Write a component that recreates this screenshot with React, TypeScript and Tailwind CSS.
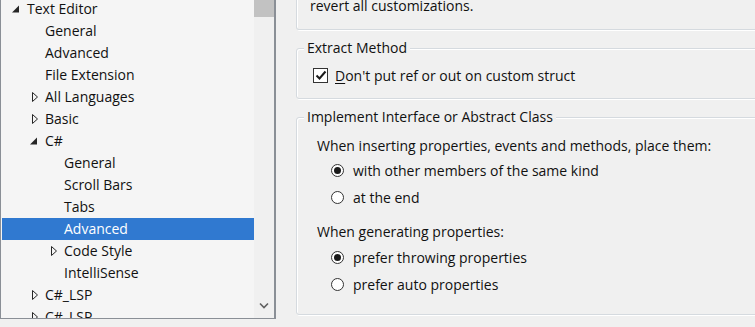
import React from "react";

type Row = { label: string; level: number; arrow?: "open" | "closed"; selected?: boolean };

const rows: Row[] = [
  { label: "Text Editor", level: 0, arrow: "open" },
  { label: "General", level: 1 },
  { label: "Advanced", level: 1 },
  { label: "File Extension", level: 1 },
  { label: "All Languages", level: 1, arrow: "closed" },
  { label: "Basic", level: 1, arrow: "closed" },
  { label: "C#", level: 1, arrow: "open" },
  { label: "General", level: 2 },
  { label: "Scroll Bars", level: 2 },
  { label: "Tabs", level: 2 },
  { label: "Advanced", level: 2, selected: true },
  { label: "Code Style", level: 2, arrow: "closed" },
  { label: "IntelliSense", level: 2 },
  { label: "C#_LSP", level: 1, arrow: "closed" },
  { label: "C#_LSP", level: 1, arrow: "closed" },
];

const padClass = ["pl-[7px]", "pl-[25px]", "pl-[44px]"];

function Arrow({ kind }: { kind?: "open" | "closed" }) {
  if (!kind) return <span className="w-[18px] shrink-0" />;
  if (kind === "open")
    return (
      <svg width="18" height="22" viewBox="0 0 18 22" className="shrink-0">
        <polygon points="10,14.5 3,14.5 10,7.5" fill="#262626" />
      </svg>
    );
  return (
    <svg width="18" height="22" viewBox="0 0 18 22" className="shrink-0">
      <polygon points="5.5,6.5 5.5,15.5 10.5,11" fill="none" stroke="#262626" strokeWidth="1" />
    </svg>
  );
}

function Radio({ checked }: { checked?: boolean }) {
  return (
    <span className="w-[13px] h-[13px] rounded-full border border-[#333] bg-white flex items-center justify-center shrink-0">
      {checked && <span className="w-[7px] h-[7px] rounded-full bg-[#1a1a1a]" />}
    </span>
  );
}

function Group({ title, children, cls }: { title?: string; children: React.ReactNode; cls: string }) {
  return (
    <div className={`relative border border-[#d5dadf] rounded-[3px] shadow-[inset_1px_1px_0_#ffffff,1px_1px_0_#ffffff] ${cls}`}>
      {title && (
        <span className="absolute left-[7px] top-[-11px] px-[3px] bg-[#f0f0f0] leading-[20px]">{title}</span>
      )}
      {children}
    </div>
  );
}

export default function App() {
  return (
    <div
      className="w-[755px] h-[327px] bg-[#f0f0f0] flex overflow-hidden text-[#111111] text-[14px]"
      style={{ fontFamily: '"Open Sans", "Noto Sans", sans-serif' }}
    >
      {/* Tree */}
      <div className="w-[276px] h-[319px] shrink-0 border-l border-b border-r-[2px] border-[#8a8f96] bg-[#f5f5f5] flex overflow-hidden">
        <div className="flex-1 flex flex-col mt-[-2px] pl-px">
          {rows.map((r, i) => (
            <div
              key={i}
              className={`h-[22px] shrink-0 flex items-center ${padClass[r.level]} ${r.selected ? "bg-[#3079d0] text-white" : ""}`}
            >
              <Arrow kind={r.arrow} />
              <span className="whitespace-nowrap leading-[22px]">{r.label}</span>
            </div>
          ))}
        </div>
        <div className="w-[20px] shrink-0 bg-[#f0f0f0] flex flex-col justify-between">
          <div className="h-[17px] bg-[#c2c2c2]" />
          <div className="h-[20px] flex items-center justify-center mb-[3px]">
            <svg width="10" height="7" viewBox="0 0 10 7">
              <polyline points="1,1.5 5,5.5 9,1.5" fill="none" stroke="#606060" strokeWidth="1.6" />
            </svg>
          </div>
        </div>
      </div>

      {/* Right */}
      <div className="flex-1 flex flex-col pl-[20px] pt-0 gap-[18px] -mr-[10px]">
        <Group cls="h-[31px] mt-[-1px] border-t-0 rounded-t-none">
          <div className="pl-[13px] mt-[-3px] leading-[20px] whitespace-nowrap">revert all customizations.</div>
        </Group>
        <Group title="Extract Method" cls="h-[51px] pt-[16px] pl-[16px]">
          <div className="flex items-center gap-[7px]">
            <span className="w-[15px] h-[15px] border border-[#333] bg-white flex items-center justify-center">
              <svg width="12" height="11" viewBox="0 0 12 11">
                <polyline points="1.5,5.5 4.5,8.5 10.5,1.5" fill="none" stroke="#1a1a1a" strokeWidth="2" />
              </svg>
            </span>
            <span className="whitespace-nowrap">
              <span className="underline underline-offset-2">D</span>on't put ref or out on custom struct
            </span>
          </div>
        </Group>
        <Group title="Implement Interface or Abstract Class" cls="h-[198px] pt-[18px] pl-[20px]">
          <div className="leading-[20px] whitespace-nowrap">When inserting properties, events and methods, place them:</div>
          <div className="pl-[14px] mt-[4px] flex flex-col gap-[7px]">
            <div className="flex items-center gap-[9px] h-[20px]">
              <Radio checked />
              <span className="whitespace-nowrap">with other members of the same kind</span>
            </div>
            <div className="flex items-center gap-[9px] h-[20px]">
              <Radio />
              <span className="whitespace-nowrap">at the end</span>
            </div>
          </div>
          <div className="leading-[20px] whitespace-nowrap mt-[15px]">When generating properties:</div>
          <div className="pl-[14px] mt-[5px] flex flex-col gap-[7px]">
            <div className="flex items-center gap-[9px] h-[20px]">
              <Radio checked />
              <span className="whitespace-nowrap">prefer throwing properties</span>
            </div>
            <div className="flex items-center gap-[9px] h-[20px]">
              <Radio />
              <span className="whitespace-nowrap">prefer auto properties</span>
            </div>
          </div>
        </Group>
      </div>
    </div>
  );
}
